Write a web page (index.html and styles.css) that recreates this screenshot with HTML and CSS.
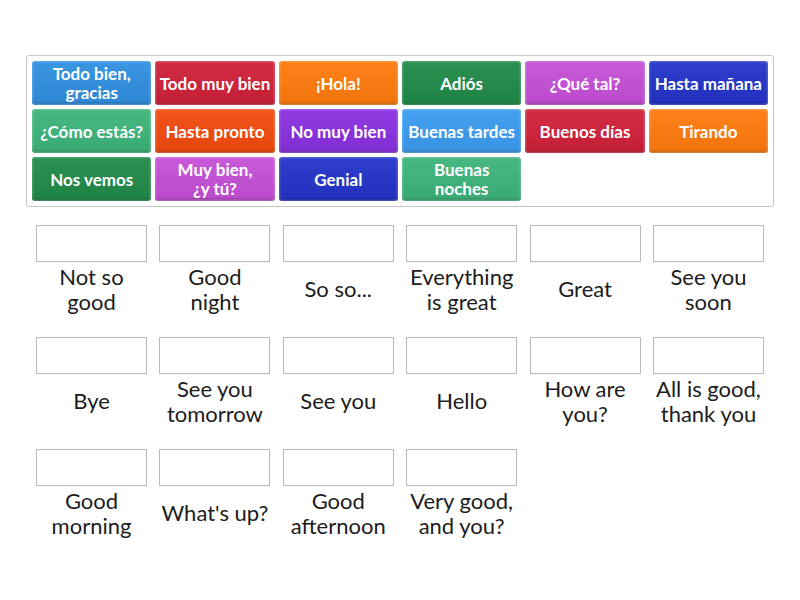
FILE: index.html
```html
<!DOCTYPE html>
<html lang="es">
<head>
<meta charset="utf-8">
<title>Match up</title>
<link rel="stylesheet" href="styles.css">
</head>
<body>
<div class="pool">
  <div class="tile c-sky">Todo bien,<br>gracias</div>
  <div class="tile c-red">Todo muy bien</div>
  <div class="tile c-orange">¡Hola!</div>
  <div class="tile c-green">Adiós</div>
  <div class="tile c-pink">¿Qué tal?</div>
  <div class="tile c-royal">Hasta mañana</div>
  <div class="tile c-teal">¿Cómo estás?</div>
  <div class="tile c-flame">Hasta pronto</div>
  <div class="tile c-violet">No muy bien</div>
  <div class="tile c-sky2">Buenas tardes</div>
  <div class="tile c-red">Buenos días</div>
  <div class="tile c-orange">Tirando</div>
  <div class="tile c-green">Nos vemos</div>
  <div class="tile c-pink">Muy bien,<br>¿y tú?</div>
  <div class="tile c-royal">Genial</div>
  <div class="tile c-teal">Buenas<br>noches</div>
</div>
<div class="targets">
  <div class="item"><div class="box"></div><div class="label">Not so<br>good</div></div>
  <div class="item"><div class="box"></div><div class="label">Good<br>night</div></div>
  <div class="item"><div class="box"></div><div class="label">So so...</div></div>
  <div class="item"><div class="box"></div><div class="label">Everything<br>is great</div></div>
  <div class="item"><div class="box"></div><div class="label">Great</div></div>
  <div class="item"><div class="box"></div><div class="label">See you<br>soon</div></div>
  <div class="item"><div class="box"></div><div class="label">Bye</div></div>
  <div class="item"><div class="box"></div><div class="label">See you<br>tomorrow</div></div>
  <div class="item"><div class="box"></div><div class="label">See you</div></div>
  <div class="item"><div class="box"></div><div class="label">Hello</div></div>
  <div class="item"><div class="box"></div><div class="label">How are<br>you?</div></div>
  <div class="item"><div class="box"></div><div class="label">All is good,<br>thank you</div></div>
  <div class="item"><div class="box"></div><div class="label">Good<br>morning</div></div>
  <div class="item"><div class="box"></div><div class="label">What's up?</div></div>
  <div class="item"><div class="box"></div><div class="label">Good<br>afternoon</div></div>
  <div class="item"><div class="box"></div><div class="label">Very good,<br>and you?</div></div>
</div>
</body>
</html>
```
FILE: styles.css
```css
html, body {
  margin: 0;
  padding: 0;
  background: #ffffff;
}

body {
  font-family: "Lato", "Liberation Sans", sans-serif;
  color: #1c1c1c;
}

.pool {
  margin: 55px 26px 0 26px;
  border: 1px solid #c6c6c6;
  border-radius: 3px;
  padding: 5px 5px 5px 5px;
  display: grid;
  grid-template-columns: repeat(6, 1fr);
  grid-auto-rows: 44px;
  gap: 4px 4px;
}

.tile {
  display: flex;
  align-items: center;
  justify-content: center;
  text-align: center;
  white-space: nowrap;
  color: #ffffff;
  font-weight: 700;
  font-size: 17px;
  line-height: 19px;
  border-radius: 3px;
  box-shadow: inset 0 0 0 1.5px rgba(255, 255, 255, 0.16), inset 0 -3px 0 rgba(0, 0, 0, 0.12);
  background-image: linear-gradient(to bottom, rgba(255, 255, 255, 0.06), rgba(0, 0, 0, 0.06));
}

.c-sky { background-color: #2f8fe0; }
.c-sky2 { background-color: #3a9cef; }
.c-red { background-color: #d0203a; }
.c-orange { background-color: #ff7a0c; }
.c-green { background-color: #1f8a48; }
.c-pink { background-color: #c54fd6; }
.c-royal { background-color: #2232c8; }
.c-teal { background-color: #3db47b; }
.c-flame { background-color: #f2490c; }
.c-violet { background-color: #8a2fe0; }

.targets {
  margin: 18px 0 0 36px;
  width: 728px;
  display: grid;
  grid-template-columns: repeat(6, 111px);
  column-gap: 12.4px;
  row-gap: 22px;
}

.item {
  display: flex;
  flex-direction: column;
}

.box {
  height: 37px;
  box-sizing: border-box;
  border: 1px solid #b9b9b9;
  background: #ffffff;
}

.label {
  height: 53px;
  display: flex;
  align-items: center;
  justify-content: center;
  text-align: center;
  white-space: nowrap;
  font-size: 22px;
  line-height: 25px;
}
```
